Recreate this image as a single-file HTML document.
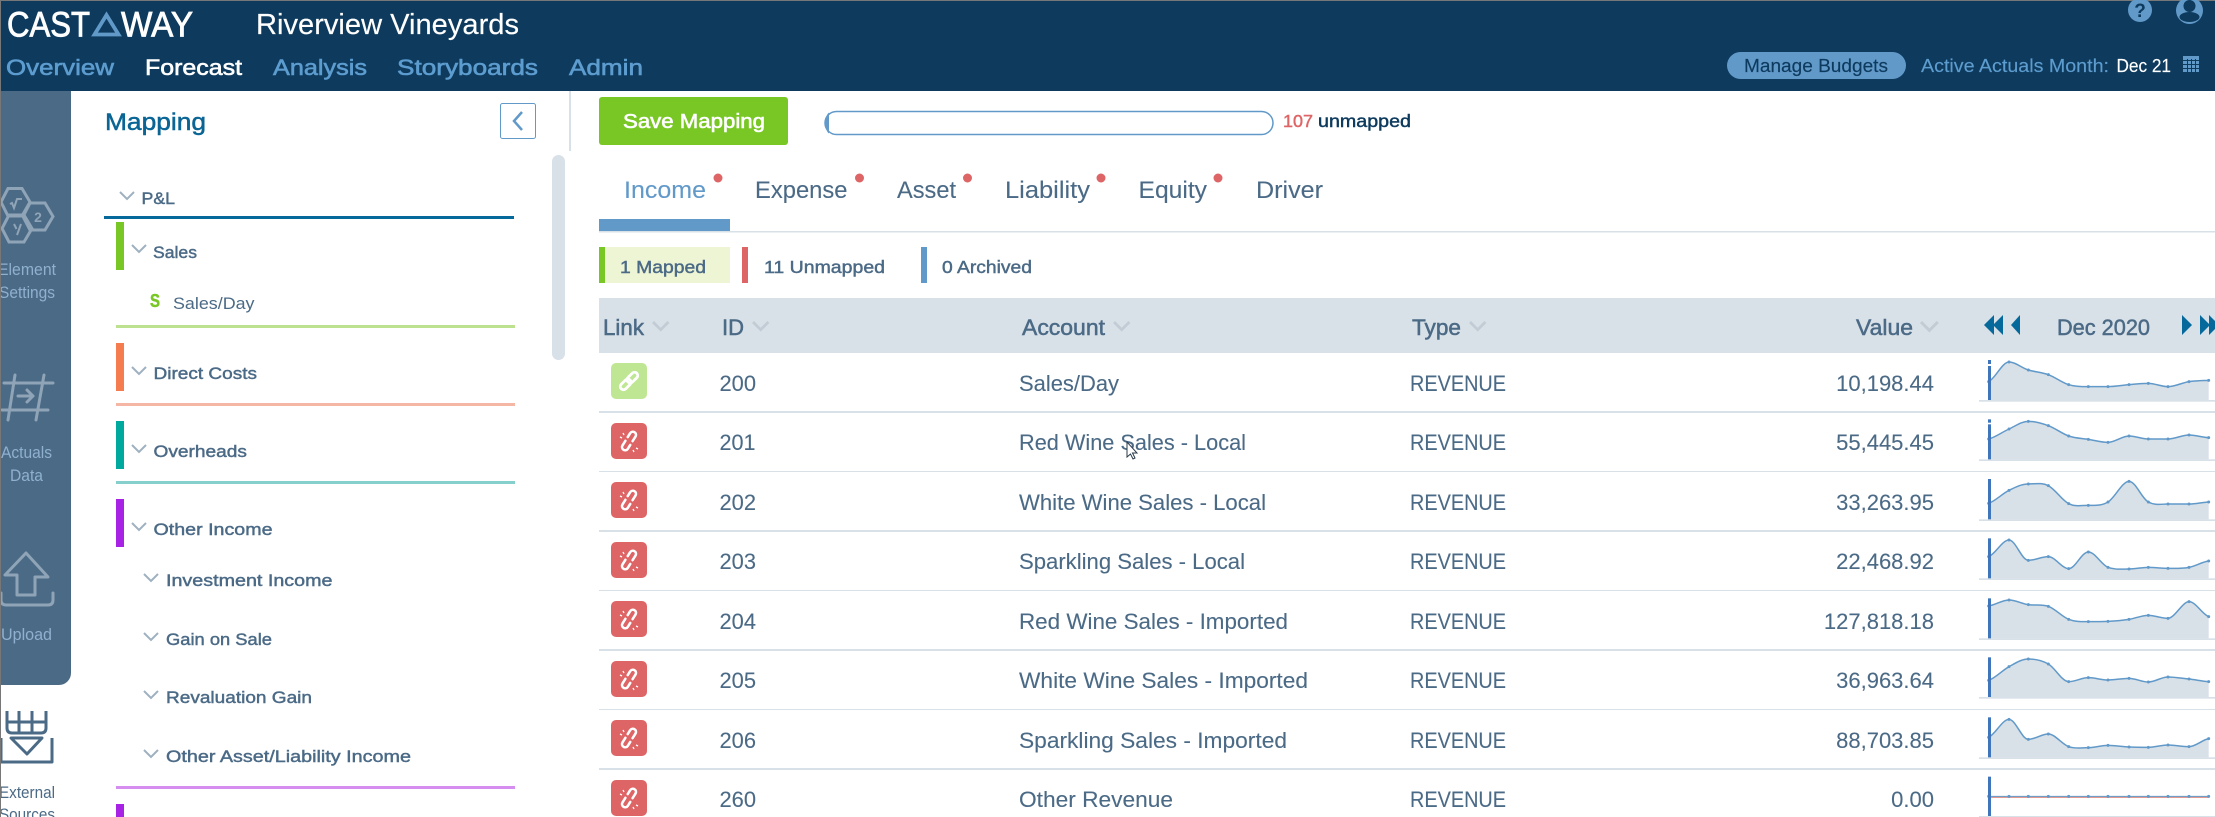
<!DOCTYPE html>
<html lang="en"><head><meta charset="utf-8"><title>Castaway Mapping</title>
<style>
html,body{margin:0;padding:0;background:#fff;width:2215px;height:817px;overflow:hidden}
svg{display:block;font-family:"Liberation Sans",Arial,sans-serif}
text{white-space:pre}
.n{font-size:22.5px;fill:#5d9ccf;stroke:#5d9ccf;stroke-width:.6}
.s{font-size:17px;fill:#4b6a86;stroke:#4b6a86;stroke-width:.45}
.p{font-size:16.5px;fill:#8fb0cf}
.t{font-size:24.5px;fill:#4b6a86;stroke:#4b6a86;stroke-width:.1}
.b{font-size:17.5px;fill:#4b6a86;stroke:#4b6a86;stroke-width:.45}
.h{font-size:22px;fill:#4b6a86;stroke:#4b6a86;stroke-width:.5}
.r{font-size:22px;fill:#4b6a86;stroke:#4b6a86;stroke-width:.1}
.c{fill:none;stroke:#9fb1c1;stroke-width:2}
.hc{fill:none;stroke:#c3ccd4;stroke-width:2.5}
.ln{fill:none;stroke:#6199c9;stroke-width:4.5;marker-start:url(#dot);marker-mid:url(#dot);marker-end:url(#dot)}
.ar{fill:#d8e0e8}
</style></head><body>
<svg width="2215" height="817" viewBox="0 0 2215 817" xmlns="http://www.w3.org/2000/svg">
<defs>
<marker id="dot" viewBox="-6 -6 12 12" markerUnits="userSpaceOnUse" markerWidth="12" markerHeight="12" refX="0" refY="0"><circle r="4.5" fill="#6199c9"/></marker>
<polyline id="ch" points="0,0 7,7 14,0"/>
<g id="ok"><rect x="611" width="36" height="36" rx="5" fill="#bfe692"/><g transform="translate(629,18) rotate(-45)" fill="none" stroke="#fff" stroke-width="2.8"><rect x="-11" y="-3.2" width="12.5" height="6.4" rx="3.2"/><rect x="-1.5" y="-3.2" width="12.5" height="6.4" rx="3.2"/></g></g>
<g id="no"><rect x="611" width="36" height="36" rx="5" fill="#de6566"/><g transform="translate(629,18) rotate(-58) scale(.9)" fill="none" stroke="#fff" stroke-width="2.800" stroke-linecap="round"><path d="M-2-3.500H-8a3.500 3.500 0 0 0 0 7H-3"/><path d="M2 3.500H8a3.500 3.500 0 0 0 0-7H3"/></g><path d="M623 10l1 2M620 14l2 1M636 25l2 1M633 27l1 2" stroke="#fff" stroke-width="1.300" fill="none"/></g>
</defs>
<rect width="2215" height="817" fill="#fff"/>
<!-- header -->
<rect width="2215" height="91" fill="#0d3a5d"/>
<rect width="2215" height="1" fill="#777"/>
<text x="7" y="36.500" font-size="35" fill="#fff" stroke="#fff" stroke-width=".8" textLength="83" lengthAdjust="spacingAndGlyphs">CAST</text>
<path d="M106.500 15L118.500 34.500H94.500Z" fill="none" stroke="#6199c9" stroke-width="3.800"/>
<text x="121" y="36.500" font-size="35" fill="#fff" stroke="#fff" stroke-width=".8" textLength="72" lengthAdjust="spacingAndGlyphs">WAY</text>
<text x="256" y="34" font-size="28.500" fill="#fff" stroke="#fff" stroke-width=".15" textLength="263" lengthAdjust="spacingAndGlyphs">Riverview Vineyards</text>
<text class="n" x="6" y="75" textLength="108" lengthAdjust="spacingAndGlyphs">Overview</text>
<text class="n" x="145" y="75" textLength="97" lengthAdjust="spacingAndGlyphs" style="fill:#fff;stroke:#fff">Forecast</text>
<text class="n" x="273" y="75" textLength="94" lengthAdjust="spacingAndGlyphs">Analysis</text>
<text class="n" x="397" y="75" textLength="141" lengthAdjust="spacingAndGlyphs">Storyboards</text>
<text class="n" x="569" y="75" textLength="74" lengthAdjust="spacingAndGlyphs">Admin</text>
<ellipse cx="2140" cy="10" rx="12" ry="12" fill="#6199c9"/>
<text x="2140" y="17" font-size="19" font-weight="bold" fill="#0d3a5d" text-anchor="middle">?</text>
<circle cx="2189.500" cy="10.500" r="13.500" fill="#6199c9"/>
<circle cx="2189.500" cy="6" r="6" fill="#0d3a5d"/>
<ellipse cx="2189.500" cy="17" rx="10" ry="5" fill="#0d3a5d"/>
<rect x="1727" y="52" width="179" height="27" rx="13.500" fill="#6199c9"/>
<text x="1744" y="72" font-size="18.500" fill="#0d3a5d" stroke="#0d3a5d" stroke-width=".15" textLength="144" lengthAdjust="spacingAndGlyphs">Manage Budgets</text>
<text x="1921" y="72" font-size="18.500" fill="#5d9ccf" stroke="#5d9ccf" stroke-width=".15" textLength="188" lengthAdjust="spacingAndGlyphs">Active Actuals Month:</text>
<text x="2116.500" y="72" font-size="18.500" fill="#fff" stroke="#fff" stroke-width=".15" textLength="54.500" lengthAdjust="spacingAndGlyphs">Dec 21</text>
<rect x="2183" y="56" width="16" height="16" fill="#6199c9"/>
<path d="M2187.500 59v13M2191.500 59v13M2195.500 59v13M2183 60.500h16M2183 64.500h16M2183 68.500h16" stroke="#0d3a5d" stroke-width="1"/>
<!-- side rail -->
<path d="M0 91H71V673a12 12 0 0 1-12 12H0Z" fill="#4b6a86"/>
<g fill="none" stroke="#8fa4b6" stroke-width="3">
<path d="M8 188.500H22L30 202L22 216H8L1 202Z"/>
<path d="M30 203H45L53 216.500L45 230H30L23 216.500Z"/>
<path d="M9 215H24L32 228.500L24 242H9L2 228.500Z"/>
<path d="M10 204l2-1 2 5 3-9h5" stroke-width="2"/>
<path d="M14 224l2.500 5M21 224l-4 11" stroke-width="2"/>
</g>
<text x="38" y="222" font-size="14" font-weight="bold" fill="#8fa4b6" text-anchor="middle">2</text>
<text class="p" x="-2" y="275" textLength="58" lengthAdjust="spacingAndGlyphs">Element</text>
<text class="p" x="-1" y="298" textLength="56" lengthAdjust="spacingAndGlyphs">Settings</text>
<g fill="none" stroke="#8fa4b6" stroke-width="3" stroke-linecap="round" stroke-linejoin="round">
<path d="M15 375L8 420M44 375L36 420M4 383H53M2 410H48"/>
<path d="M18 396H33M27 390l6 6-6 6"/>
<path d="M26 553L5 575H17V595H35V577H48Z"/>
<path d="M1 593V600Q1 605 6 605H48Q53 605 53 600V593"/>
</g>
<text class="p" x="1" y="458" textLength="51" lengthAdjust="spacingAndGlyphs">Actuals</text>
<text class="p" x="10" y="481" textLength="33" lengthAdjust="spacingAndGlyphs">Data</text>
<text class="p" x="1" y="640" textLength="51" lengthAdjust="spacingAndGlyphs">Upload</text>
<g fill="none" stroke="#4b6a86" stroke-width="3" stroke-linejoin="round">
<path d="M7 711V728Q7 733 12 733H41Q46 733 46 728V711M19 711V733M32 711V733M7 722H46"/>
<path d="M11 738H42L27 754Z"/>
<path d="M1 738V762H52V738"/>
</g>
<text x="-1" y="798" font-size="16.500" fill="#4b6a86" textLength="56" lengthAdjust="spacingAndGlyphs">External</text>
<text x="-1" y="820" font-size="16.500" fill="#4b6a86" textLength="56" lengthAdjust="spacingAndGlyphs">Sources</text>
<rect width="1" height="817" fill="#777"/>
<!-- mapping panel -->
<text x="105" y="130" font-size="24.500" fill="#0a6595" stroke="#0a6595" stroke-width=".5" textLength="101" lengthAdjust="spacingAndGlyphs">Mapping</text>
<rect x="500.500" y="103.500" width="35" height="35" rx="2" fill="#fff" stroke="#6199c9"/>
<path d="M522 112L514 121L522 130" fill="none" stroke="#6199c9" stroke-width="2.500"/>
<rect x="569" y="91" width="2" height="60" fill="#d8e0e8"/>
<rect x="552" y="155" width="13" height="205" rx="6.500" fill="#d8e0e8"/>
<use href="#ch" class="c" x="120" y="192"/>
<text class="s" x="141.500" y="204" textLength="33.500" lengthAdjust="spacingAndGlyphs">P&amp;L</text>
<rect x="104" y="216" width="410" height="3" fill="#05699b"/>
<rect x="116" y="222" width="8" height="48" fill="#78c725"/>
<use href="#ch" class="c" x="132" y="245"/>
<text class="s" x="153" y="258" textLength="44" lengthAdjust="spacingAndGlyphs">Sales</text>
<text x="150" y="307" font-size="18" font-weight="bold" fill="#78c725" stroke="#78c725" stroke-width=".5" textLength="10" lengthAdjust="spacingAndGlyphs">S</text>
<text x="173" y="309" font-size="17" fill="#4b6a86" textLength="81.500" lengthAdjust="spacingAndGlyphs">Sales/Day</text>
<rect x="116" y="325" width="399" height="3" fill="#bde28f"/>
<rect x="116" y="343" width="8" height="48" fill="#f47c4e"/>
<use href="#ch" class="c" x="132" y="367"/>
<text class="s" x="153.500" y="379" textLength="103.500" lengthAdjust="spacingAndGlyphs">Direct Costs</text>
<rect x="116" y="403" width="399" height="3" fill="#f5b6a6"/>
<rect x="116" y="421" width="8" height="48" fill="#00a99d"/>
<use href="#ch" class="c" x="132" y="445"/>
<text class="s" x="153.500" y="457" textLength="93.500" lengthAdjust="spacingAndGlyphs">Overheads</text>
<rect x="116" y="481" width="399" height="3" fill="#85d0cc"/>
<rect x="116" y="499" width="8" height="48" fill="#a822e6"/>
<use href="#ch" class="c" x="132" y="523"/>
<text class="s" x="153.500" y="535" textLength="119" lengthAdjust="spacingAndGlyphs">Other Income</text>
<use href="#ch" class="c" x="144" y="574"/>
<text class="s" x="166" y="586" textLength="166.500" lengthAdjust="spacingAndGlyphs">Investment Income</text>
<use href="#ch" class="c" x="144" y="633"/>
<text class="s" x="166" y="645" textLength="106" lengthAdjust="spacingAndGlyphs">Gain on Sale</text>
<use href="#ch" class="c" x="144" y="691"/>
<text class="s" x="166" y="703" textLength="146" lengthAdjust="spacingAndGlyphs">Revaluation Gain</text>
<use href="#ch" class="c" x="144" y="750"/>
<text class="s" x="166" y="762" textLength="245" lengthAdjust="spacingAndGlyphs">Other Asset/Liability Income</text>
<rect x="116" y="786" width="399" height="3" fill="#d58df0"/>
<rect x="116" y="804" width="8" height="13" fill="#a822e6"/>
<!-- toolbar -->
<rect x="599" y="97" width="189" height="48" rx="3" fill="#78c725"/>
<text x="623" y="128" font-size="20.500" fill="#fff" stroke="#fff" stroke-width=".6" textLength="142" lengthAdjust="spacingAndGlyphs">Save Mapping</text>
<rect x="825" y="111.500" width="448" height="23" rx="11.500" fill="#fff" stroke="#6199c9" stroke-width="1.500"/>
<path d="M829 112.500V133.500Q825.500 131 825.500 123Q825.500 115 829 112.500Z" fill="#6199c9"/>
<text x="1283" y="127" font-size="17.500" fill="#de6566" stroke="#de6566" stroke-width=".45" textLength="30" lengthAdjust="spacingAndGlyphs">107</text>
<text x="1318" y="127" font-size="17.500" fill="#0d3a5d" stroke="#0d3a5d" stroke-width=".45" textLength="93" lengthAdjust="spacingAndGlyphs">unmapped</text>
<!-- tabs -->
<text class="t" x="624" y="198" textLength="82" lengthAdjust="spacingAndGlyphs" style="fill:#6199c9;stroke:#6199c9">Income</text>
<text class="t" x="755" y="198" textLength="92.500" lengthAdjust="spacingAndGlyphs">Expense</text>
<text class="t" x="897" y="198" textLength="59" lengthAdjust="spacingAndGlyphs">Asset</text>
<text class="t" x="1005" y="198" textLength="85" lengthAdjust="spacingAndGlyphs">Liability</text>
<text class="t" x="1138.500" y="198" textLength="68.500" lengthAdjust="spacingAndGlyphs">Equity</text>
<text class="t" x="1256" y="198" textLength="67" lengthAdjust="spacingAndGlyphs">Driver</text>
<g fill="#de6566"><circle cx="718" cy="178" r="4.500"/><circle cx="859.500" cy="178" r="4.500"/><circle cx="967.500" cy="178" r="4.500"/><circle cx="1101" cy="178" r="4.500"/><circle cx="1218" cy="178" r="4.500"/></g>
<rect x="599" y="231" width="1616" height="1.500" fill="#d8e0e8"/>
<rect x="599" y="219" width="131" height="12" fill="#6199c9"/>
<!-- status -->
<rect x="599" y="247" width="131" height="36" fill="#eef5d4"/>
<rect x="599" y="247" width="6" height="36" fill="#78c725"/>
<text class="b" x="620" y="273" textLength="86" lengthAdjust="spacingAndGlyphs">1 Mapped</text>
<rect x="742" y="247" width="6" height="36" fill="#de6566"/>
<text class="b" x="764" y="273" textLength="121" lengthAdjust="spacingAndGlyphs">11 Unmapped</text>
<rect x="921" y="247" width="6" height="36" fill="#6199c9"/>
<text class="b" x="942" y="273" textLength="90" lengthAdjust="spacingAndGlyphs">0 Archived</text>
<!-- table header -->
<rect x="599" y="298" width="1616" height="55" fill="#d8e0e8"/>
<text class="h" x="603" y="335" textLength="41" lengthAdjust="spacingAndGlyphs">Link</text>
<use href="#ch" class="hc" transform="translate(653,322) scale(1.100)"/>
<text class="h" x="722" y="335" textLength="22" lengthAdjust="spacingAndGlyphs">ID</text>
<use href="#ch" class="hc" transform="translate(753,322) scale(1.100)"/>
<text class="h" x="1022" y="335" textLength="83" lengthAdjust="spacingAndGlyphs">Account</text>
<use href="#ch" class="hc" transform="translate(1114,322) scale(1.100)"/>
<text class="h" x="1412" y="335" textLength="49" lengthAdjust="spacingAndGlyphs">Type</text>
<use href="#ch" class="hc" transform="translate(1470,322) scale(1.100)"/>
<text class="h" x="1856" y="335" textLength="57" lengthAdjust="spacingAndGlyphs">Value</text>
<use href="#ch" class="hc" transform="translate(1921,322) scale(1.200)"/>
<g fill="#05699b">
<path d="M1994 315V335L1984 325ZM2003 315V335L1993 325Z"/>
<path d="M2020 315V335L2011 325Z"/>
<path d="M2182 315V335L2192 325Z"/>
<path d="M2200 315V335L2210 325ZM2209 315V335L2219 325Z"/>
</g>
<text class="h" x="2057" y="335" textLength="93" lengthAdjust="spacingAndGlyphs">Dec 2020</text>
<!-- row lines -->
<g fill="#d8e0e8">
<rect x="599" y="411" width="1616" height="2"/><rect x="599" y="471" width="1616" height="1"/>
<rect x="599" y="530" width="1616" height="2"/><rect x="599" y="590" width="1616" height="1"/>
<rect x="599" y="649" width="1616" height="2"/><rect x="599" y="709" width="1616" height="1"/>
<rect x="599" y="768" width="1616" height="2"/>
</g>
<!-- link icons -->
<use href="#ok" y="363"/><use href="#no" y="423"/><use href="#no" y="482"/><use href="#no" y="542"/>
<use href="#no" y="601"/><use href="#no" y="661"/><use href="#no" y="720"/><use href="#no" y="780"/>
<!-- rows -->
<g class="r">
<text x="719.500" y="391" textLength="36.500" lengthAdjust="spacingAndGlyphs">200</text>
<text x="719.500" y="450" textLength="36" lengthAdjust="spacingAndGlyphs">201</text>
<text x="719.500" y="510" textLength="36.500" lengthAdjust="spacingAndGlyphs">202</text>
<text x="719.500" y="569" textLength="36.500" lengthAdjust="spacingAndGlyphs">203</text>
<text x="719.500" y="629" textLength="36.500" lengthAdjust="spacingAndGlyphs">204</text>
<text x="719.500" y="688" textLength="36.500" lengthAdjust="spacingAndGlyphs">205</text>
<text x="719.500" y="748" textLength="36.500" lengthAdjust="spacingAndGlyphs">206</text>
<text x="719.500" y="807" textLength="36.500" lengthAdjust="spacingAndGlyphs">260</text>
<text x="1019" y="391" textLength="100" lengthAdjust="spacingAndGlyphs">Sales/Day</text>
<text x="1019" y="450" textLength="227" lengthAdjust="spacingAndGlyphs">Red Wine Sales - Local</text>
<text x="1019" y="510" textLength="247" lengthAdjust="spacingAndGlyphs">White Wine Sales - Local</text>
<text x="1019" y="569" textLength="226" lengthAdjust="spacingAndGlyphs">Sparkling Sales - Local</text>
<text x="1019" y="629" textLength="269" lengthAdjust="spacingAndGlyphs">Red Wine Sales - Imported</text>
<text x="1019" y="688" textLength="289" lengthAdjust="spacingAndGlyphs">White Wine Sales - Imported</text>
<text x="1019" y="748" textLength="268" lengthAdjust="spacingAndGlyphs">Sparkling Sales - Imported</text>
<text x="1019" y="807" textLength="154" lengthAdjust="spacingAndGlyphs">Other Revenue</text>
<text x="1410" y="391" textLength="96" lengthAdjust="spacingAndGlyphs">REVENUE</text>
<text x="1410" y="450" textLength="96" lengthAdjust="spacingAndGlyphs">REVENUE</text>
<text x="1410" y="510" textLength="96" lengthAdjust="spacingAndGlyphs">REVENUE</text>
<text x="1410" y="569" textLength="96" lengthAdjust="spacingAndGlyphs">REVENUE</text>
<text x="1410" y="629" textLength="96" lengthAdjust="spacingAndGlyphs">REVENUE</text>
<text x="1410" y="688" textLength="96" lengthAdjust="spacingAndGlyphs">REVENUE</text>
<text x="1410" y="748" textLength="96" lengthAdjust="spacingAndGlyphs">REVENUE</text>
<text x="1410" y="807" textLength="96" lengthAdjust="spacingAndGlyphs">REVENUE</text>
<g text-anchor="end">
<text x="1934" y="391">10,198.44</text><text x="1934" y="450">55,445.45</text>
<text x="1934" y="510">33,263.95</text><text x="1934" y="569">22,468.92</text>
<text x="1934" y="629">127,818.18</text><text x="1934" y="688">36,963.64</text>
<text x="1934" y="748">88,703.85</text><text x="1934" y="807">0.00</text>
</g>
</g>
<!-- sparklines -->
<g transform="translate(1900,290) scale(.33333)">
<g fill="#d8e0e8"><rect x="237" y="330" width="708" height="5"/><rect x="237" y="508" width="708" height="5"/><rect x="237" y="688" width="708" height="5"/></g>
<path class="ar" d="M266 275C286 265 307 216 327 216S365 234 385 240S425 247 445 254S486 278 506 284S545 290 565 290S604 290 624 290S667 286 687 284S725 280 745 280S784 290 804 290S847 278 867 275S906 272 926 271V330H266Z"/>
<path class="ln" d="M266 275C286 265 307 216 327 216S365 234 385 240S425 247 445 254S486 278 506 284S545 290 565 290S604 290 624 290S667 286 687 284S725 280 745 280S784 290 804 290S847 278 867 275S906 272 926 271"/>
<path class="ar" d="M266 447C286 442 307 426 327 417S365 394 385 394S425 400 445 407S486 431 506 438S545 445 565 448S604 457 624 457S667 438 687 438S725 447 745 447S784 447 804 447S847 435 867 435S906 442 926 443V508H266Z"/>
<path class="ln" d="M266 447C286 442 307 426 327 417S365 394 385 394S425 400 445 407S486 431 506 438S545 445 565 448S604 457 624 457S667 438 687 438S725 447 745 447S784 447 804 447S847 435 867 435S906 442 926 443"/>
<path class="ar" d="M266 640C286 633 307 611 327 601S365 582 385 582S425 577 445 587S486 631 506 641S545 646 565 646S604 648 624 636S667 574 687 574S725 625 745 636S784 642 804 642S847 642 867 642S906 637 926 636V688H266Z"/>
<path class="ln" d="M266 640C286 633 307 611 327 601S365 582 385 582S425 577 445 587S486 631 506 641S545 646 565 646S604 648 624 636S667 574 687 574S725 625 745 636S784 642 804 642S847 642 867 642S906 637 926 636"/>
<g fill="#3f76bb"><rect x="264" y="210" width="9" height="120"/><rect x="264" y="388" width="9" height="120"/><rect x="264" y="567" width="9" height="121"/></g>
<g fill="#fff"><rect x="264" y="222" width="9" height="6"/><rect x="264" y="398" width="9" height="5"/></g>
</g>
<g transform="translate(1900,550) scale(.33333)">
<g fill="#d8e0e8"><rect x="237" y="85" width="708" height="5"/><rect x="237" y="265" width="708" height="5"/><rect x="237" y="441" width="708" height="5"/><rect x="237" y="622" width="708" height="5"/><rect x="237" y="798" width="708" height="5"/></g>
<path class="ar" d="M266 20C286 12 307 -30 327 -30S365 31 385 31S425 20 445 20S486 56 506 56S545 6 565 6S604 44 624 52S667 57 687 57S725 52 745 52S784 55 804 55S847 56 867 52S906 36 926 33V85H266Z"/>
<path class="ln" d="M266 20C286 12 307 -30 327 -30S365 31 385 31S425 20 445 20S486 56 506 56S545 6 565 6S604 44 624 52S667 57 687 57S725 52 745 52S784 55 804 55S847 56 867 52S906 36 926 33"/>
<path class="ar" d="M266 168C286 165 307 150 327 150S365 161 385 164S425 162 445 169S486 200 506 208S545 215 565 215S604 215 624 214S667 211 687 208S725 196 745 196S784 205 804 205S847 155 867 155S906 192 926 200V265H266Z"/>
<path class="ln" d="M266 168C286 165 307 150 327 150S365 161 385 164S425 162 445 169S486 200 506 208S545 215 565 215S604 215 624 214S667 211 687 208S725 196 745 196S784 205 804 205S847 155 867 155S906 192 926 200"/>
<path class="ar" d="M266 391C286 384 307 361 327 350S365 327 385 327S425 331 445 342S486 395 506 395S545 383 565 383S604 390 624 390S667 385 687 385S725 396 745 396S784 381 804 381S847 385 867 387S906 394 926 395V441H266Z"/>
<path class="ln" d="M266 391C286 384 307 361 327 350S365 327 385 327S425 331 445 342S486 395 506 395S545 383 565 383S604 390 624 390S667 385 687 385S725 396 745 396S784 381 804 381S847 385 867 387S906 394 926 395"/>
<path class="ar" d="M266 562C286 553 307 508 327 508S365 568 385 568S425 552 445 552S486 583 506 590S545 593 565 593S604 586 624 586S667 590 687 591S725 592 745 592S784 585 804 585S847 590 867 590S906 570 926 566V622H266Z"/>
<path class="ln" d="M266 562C286 553 307 508 327 508S365 568 385 568S425 552 445 552S486 583 506 590S545 593 565 593S604 586 624 586S667 590 687 591S725 592 745 592S784 585 804 585S847 590 867 590S906 570 926 566"/>
<rect x="266" y="740" width="660" height="4" fill="#e29a90"/>
<path class="ln" d="M266 739H327H385H445H506H565H624H687H745H804H867H926" style="stroke-width:3"/>
<g fill="#3f76bb"><rect x="264" y="-35" width="9" height="120"/><rect x="264" y="145" width="9" height="120"/><rect x="264" y="322" width="9" height="119"/><rect x="264" y="502" width="9" height="120"/><rect x="264" y="680" width="9" height="118"/></g>
</g>
<!-- cursor -->
<path d="M1127 442v15l3.500-3 2.500 5 2-1-2.500-5h4.500z" fill="#fff" stroke="#2a3a4a" stroke-width="1"/>
</svg>
</body></html>
